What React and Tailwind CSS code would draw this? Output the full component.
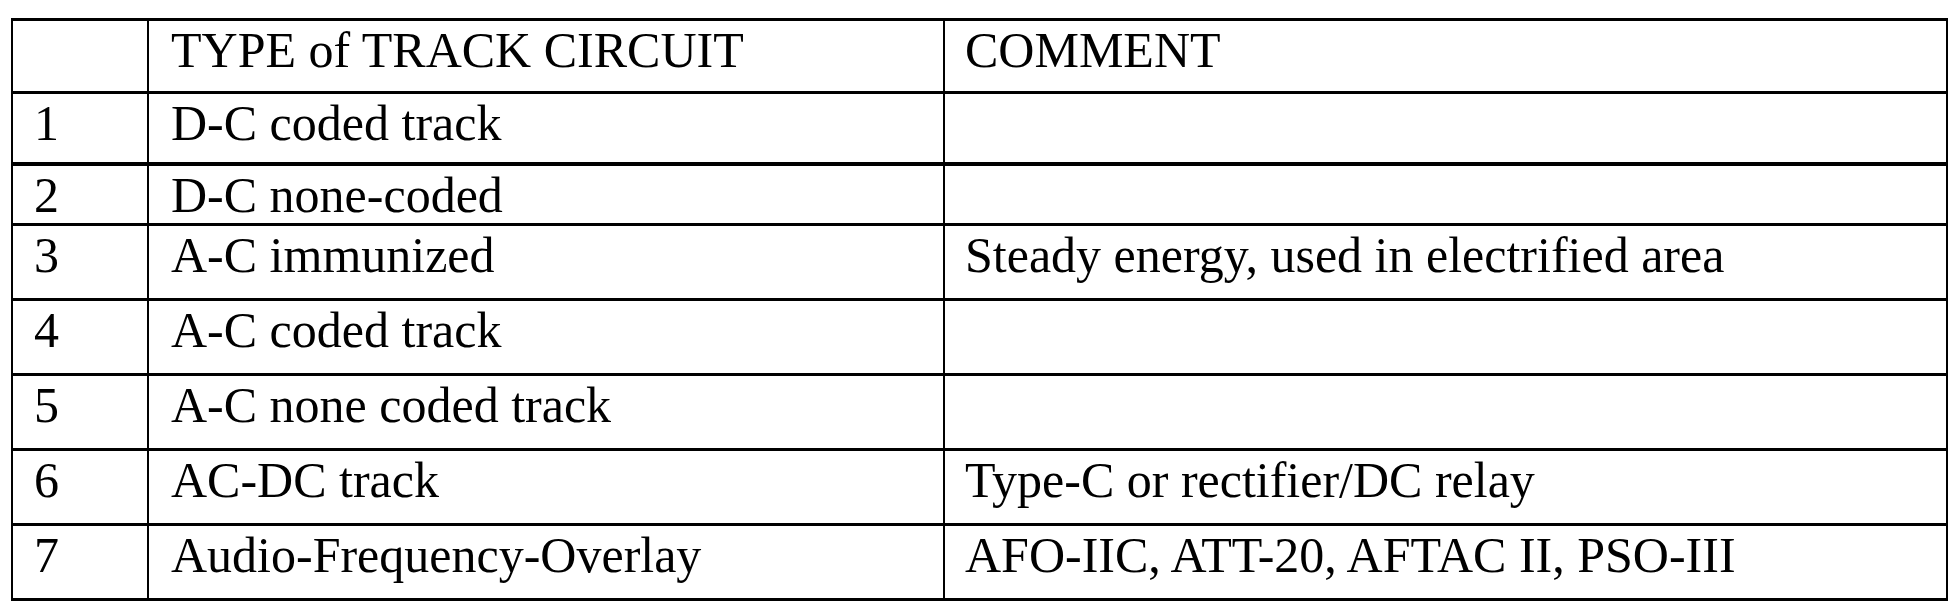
const rows = [
  { n: "1", type: "D-C coded track", comment: "", h: "h-[72px]", b: "border-b-[4px]" },
  { n: "2", type: "D-C none-coded", comment: "", h: "h-[60px]", b: "border-b-[3px]" },
  { n: "3", type: "A-C immunized", comment: "Steady energy, used in electrified area", h: "h-[75px]", b: "border-b-[3px]" },
  { n: "4", type: "A-C coded track", comment: "", h: "h-[75px]", b: "border-b-[3px]" },
  { n: "5", type: "A-C none coded track", comment: "", h: "h-[75px]", b: "border-b-[3px]" },
  { n: "6", type: "AC-DC track", comment: "Type-C or rectifier/DC relay", h: "h-[75px]", b: "border-b-[3px]" },
  { n: "7", type: "Audio-Frequency-Overlay", comment: "AFO-IIC, ATT-20, AFTAC II, PSO-III", h: "h-[75px]", b: "border-b-[3px]" },
];

function Row({ n, type, comment, h, b }) {
  return (
    <div className={`grid grid-cols-[136px_796px_1fr] ${h} ${b} border-black`}>
      <div className="border-r-2 border-black pl-[21px] pt-[4px] whitespace-nowrap">{n}</div>
      <div className="border-r-2 border-black pl-[22px] pt-[4px] whitespace-nowrap">{type}</div>
      <div className="pl-[20px] pt-[4px] whitespace-nowrap">{comment}</div>
    </div>
  );
}

export default function App() {
  return (
    <div className="w-[1956px] h-[607px] bg-white overflow-hidden pt-[18px] pl-[11px]">
      <div
        className="w-[1937px] border-t-[3px] border-x-2 border-black text-black text-[50px] leading-none"
        style={{ fontFamily: '"Liberation Serif", "Times New Roman", serif' }}
      >
        {/* header */}
        <div className="grid grid-cols-[136px_796px_1fr] h-[73px] border-b-[3px] border-black">
          <div className="border-r-2 border-black" />
          <div className="border-r-2 border-black pl-[22px] pt-[4px] whitespace-nowrap">TYPE of TRACK CIRCUIT</div>
          <div className="pl-[20px] pt-[4px] whitespace-nowrap">COMMENT</div>
        </div>
        {rows.map((r) => (
          <Row key={r.n} {...r} />
        ))}
      </div>
    </div>
  );
}
